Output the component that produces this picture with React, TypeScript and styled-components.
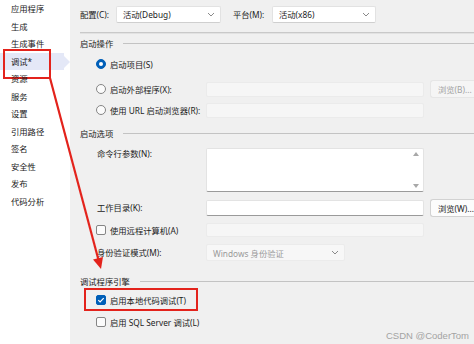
import React from 'react';
import styled, { createGlobalStyle } from 'styled-components';

const GlobalStyle = createGlobalStyle`
  html, body { margin: 0; padding: 0; background: #f0f0f0; }
  * { box-sizing: border-box; }
`;

const Page = styled.div`
  position: relative;
  display: flex;
  width: 474px;
  height: 344px;
  overflow: hidden;
  font-family: "Noto Sans", "Noto Sans CJK SC", sans-serif;
  font-size: 8.3px;
  color: #1b1b1b;
`;

const Sidebar = styled.nav`
  width: 70px;
  flex-shrink: 0;
  background: #fff;
  display: flex;
  flex-direction: column;
`;

const NavItem = styled.div<{ $active?: boolean }>`
  position: relative;
  height: 17.5px;
  line-height: 17.5px;
  padding-left: 11px;
  margin-right: ${p => (p.$active ? '6px' : '0')};
  background: ${p => (p.$active ? '#e4e8f7' : 'transparent')};
  &::after {
    content: '';
    display: ${p => (p.$active ? 'block' : 'none')};
    position: absolute;
    right: -6px;
    top: 3px;
    border-left: 6px solid #e4e8f7;
    border-top: 6px solid transparent;
    border-bottom: 6px solid transparent;
  }
  &::before {
    content: '';
    display: ${p => (p.$active ? 'block' : 'none')};
    position: absolute;
    left: 3px;
    top: -4px;
    width: 44px;
    height: 26px;
    border: 2px solid #e3231c;
  }
`;

const Main = styled.main`
  flex: 1;
  background: #f0f0f0;
  padding: 5px 0 0 10px;
  display: flex;
  flex-direction: column;
`;

const TopBar = styled.div`
  display: flex;
  align-items: center;
  height: 18px;
`;

const TopLabel = styled.span<{ $w: number }>`
  width: ${p => p.$w}px;
  flex-shrink: 0;
`;

const Select = styled.div<{ $w: number; $disabled?: boolean }>`
  width: ${p => p.$w}px;
  height: 17px;
  flex-shrink: 0;
  display: flex;
  align-items: center;
  justify-content: space-between;
  padding: 0 5px 0 6px;
  background: ${p => (p.$disabled ? '#f7f7f7' : '#fff')};
  border: 1px solid ${p => (p.$disabled ? '#ebebeb' : '#e2e2e2')};
  border-bottom-color: ${p => (p.$disabled ? '#ebebeb' : '#cfcfcf')};
  border-radius: 2px;
  color: ${p => (p.$disabled ? '#9a9a9a' : '#1b1b1b')};
  margin-right: 12px;
`;

const Separator = styled.div`
  margin-top: 9px;
  height: 2px;
  border-top: 1px solid #c9c9c9;
  border-bottom: 1px solid #e2e2e2;
`;

const GroupHeader = styled.div<{ $mt: number }>`
  display: flex;
  align-items: center;
  gap: 10px;
  height: 14px;
  margin-top: ${p => p.$mt}px;
  &::after {
    content: '';
    flex: 1;
    height: 1px;
    background: #c3c3c3;
  }
`;

const Row = styled.div<{ $mt: number; $h: number; $top?: boolean }>`
  display: grid;
  grid-template-columns: 126px 218px 50px;
  align-items: ${p => (p.$top ? 'start' : 'center')};
  height: ${p => p.$h}px;
  margin-top: ${p => p.$mt}px;
`;

const Label = styled.span<{ $indent?: number }>`
  padding-left: ${p => p.$indent ?? 17}px;
  line-height: 12px;
  white-space: nowrap;
`;

const Choice = styled.label`
  display: flex;
  align-items: center;
  gap: 4px;
  padding-left: 16px;
  white-space: nowrap;
`;

const Radio = styled.span<{ $on?: boolean }>`
  width: 10px;
  height: 10px;
  border-radius: 50%;
  flex-shrink: 0;
  background: ${p => (p.$on ? '#005fb8' : '#fbfbfb')};
  border: 1px solid ${p => (p.$on ? '#005fb8' : '#858585')};
  display: flex;
  align-items: center;
  justify-content: center;
  &::after {
    content: '';
    display: ${p => (p.$on ? 'block' : 'none')};
    width: 4px;
    height: 4px;
    border-radius: 50%;
    background: #fff;
  }
`;

const Check = styled.span<{ $on?: boolean }>`
  width: 10px;
  height: 10px;
  border-radius: 2px;
  flex-shrink: 0;
  background: ${p => (p.$on ? '#005fb8' : '#fbfbfb')};
  border: 1px solid ${p => (p.$on ? '#005fb8' : '#858585')};
  display: flex;
  align-items: center;
  justify-content: center;
`;

const Field = styled.div<{ $h: number; $disabled?: boolean }>`
  position: relative;
  height: ${p => p.$h}px;
  background: ${p => (p.$disabled ? '#f6f6f6' : '#fff')};
  border: 1px solid ${p => (p.$disabled ? '#ebebeb' : '#e3e3e3')};
  border-bottom-color: ${p => (p.$disabled ? '#ebebeb' : '#9a9a9a')};
  border-radius: 2px;
`;

const ScrollArrow = styled.span<{ $down?: boolean }>`
  position: absolute;
  right: 4px;
  ${p => (p.$down ? 'bottom: 3px;' : 'top: 3px;')}
  width: 0;
  height: 0;
  border-left: 3px solid transparent;
  border-right: 3px solid transparent;
  ${p => (p.$down ? 'border-top: 4px solid #a8a8a8;' : 'border-bottom: 4px solid #a8a8a8;')}
`;

const Button = styled.div<{ $disabled?: boolean }>`
  height: 18px;
  margin-left: 6px;
  display: flex;
  align-items: center;
  padding-left: 7px;
  white-space: nowrap;
  background: ${p => (p.$disabled ? '#f5f5f5' : '#fcfcfc')};
  border: 1px solid ${p => (p.$disabled ? '#e6e6e6' : '#d2d2d2')};
  border-right: none;
  border-radius: 3px 0 0 3px;
  color: ${p => (p.$disabled ? '#a2a2a2' : '#1b1b1b')};
`;

const Marked = styled.div`
  display: flex;
  align-items: center;
  width: 114px;
  height: 23px;
  margin-left: 4px;
  padding-left: 10px;
  gap: 4px;
  border: 2px solid #e3231c;
  white-space: nowrap;
`;

const PlainCheck = styled(Choice)`
  height: 16px;
  margin-top: 3px;
`;

const Watermark = styled.div`
  position: absolute;
  right: 5px;
  bottom: 3px;
  font-family: "Liberation Sans", sans-serif;
  font-size: 9.5px;
  color: #a3a3a3;
`;

const Overlay = styled.svg`
  position: absolute;
  inset: 0;
  pointer-events: none;
`;

const Chevron = () => (
  <svg width="8" height="5" viewBox="0 0 8 5">
    <path d="M1 1l3 3 3-3" fill="none" stroke="#8a8a8a" strokeWidth="1" />
  </svg>
);

const Tick = () => (
  <svg width="8" height="8" viewBox="0 0 8 8">
    <path d="M1.3 4.2l1.8 1.8 3.6-3.8" fill="none" stroke="#fff" strokeWidth="1.2" />
  </svg>
);

const navItems = ['应用程序', '生成', '生成事件', '调试*', '资源', '服务', '设置', '引用路径', '签名', '安全性', '发布', '代码分析'];

export default function App() {
  return (
    <Page>
      <GlobalStyle />
      <Sidebar>
        {navItems.map(item => (
          <NavItem key={item} $active={item === '调试*'}>{item}</NavItem>
        ))}
      </Sidebar>
      <Main>
        <TopBar>
          <TopLabel $w={36}>配置(C):</TopLabel>
          <Select $w={105}>活动(Debug)<Chevron /></Select>
          <TopLabel $w={39}>平台(M):</TopLabel>
          <Select $w={104}>活动(x86)<Chevron /></Select>
        </TopBar>
        <Separator />

        <GroupHeader $mt={2}>启动操作</GroupHeader>
        <Row $mt={6} $h={16}>
          <Choice><Radio $on />启动项目(S)</Choice>
        </Row>
        <Row $mt={8} $h={16}>
          <Choice><Radio />启动外部程序(X):</Choice>
          <Field $h={15} $disabled />
          <Button $disabled>浏览(B)...</Button>
        </Row>
        <Row $mt={6} $h={16}>
          <Choice><Radio />使用 URL 启动浏览器(R):</Choice>
          <Field $h={15} $disabled />
        </Row>

        <GroupHeader $mt={8}>启动选项</GroupHeader>
        <Row $mt={8} $h={44} $top>
          <Label>命令行参数(N):</Label>
          <Field $h={44}>
            <ScrollArrow />
            <ScrollArrow $down />
          </Field>
        </Row>
        <Row $mt={7} $h={18}>
          <Label>工作目录(K):</Label>
          <Field $h={16} />
          <Button>浏览(W)...</Button>
        </Row>
        <Row $mt={5} $h={16}>
          <Choice><Check />使用远程计算机(A)</Choice>
          <Field $h={14} $disabled />
        </Row>
        <Row $mt={6} $h={16}>
          <Label>身份验证模式(M):</Label>
          <Select $w={139} $disabled>Windows 身份验证<Chevron /></Select>
        </Row>

        <GroupHeader $mt={14}>调试程序引擎</GroupHeader>
        <Marked><Check $on><Tick /></Check>启用本地代码调试(T)</Marked>
        <PlainCheck><Check />启用 SQL Server 调试(L)</PlainCheck>
      </Main>

      <Overlay width="474" height="344" viewBox="0 0 474 344">
        <line x1="50" y1="78" x2="98.5" y2="260" stroke="#e3231c" strokeWidth="2.2" />
        <polygon points="101,269 103,257 93,259.5" fill="#e3231c" />
      </Overlay>
      <Watermark>CSDN @CoderTom</Watermark>
    </Page>
  );
}
